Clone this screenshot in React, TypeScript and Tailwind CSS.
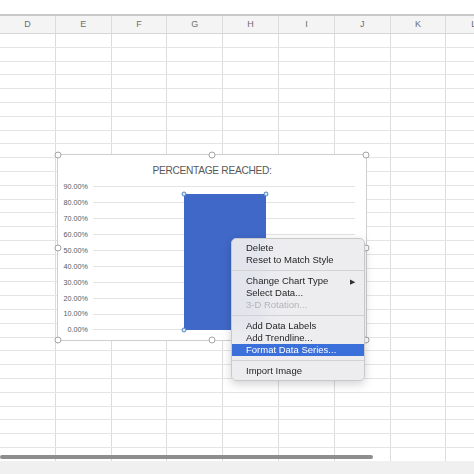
import React from "react";

const columns = ["D", "E", "F", "G", "H", "I", "J", "K", "L"];
const rowCount = 31;
const axisLabels = ["90.00%", "80.00%", "70.00%", "60.00%", "50.00%", "40.00%", "30.00%", "20.00%", "10.00%", "0.00%"];

type MenuItem = { label: string; disabled?: boolean; active?: boolean; submenu?: boolean } | "sep";

const menuItems: MenuItem[] = [
  { label: "Delete" },
  { label: "Reset to Match Style" },
  "sep",
  { label: "Change Chart Type", submenu: true },
  { label: "Select Data..." },
  { label: "3-D Rotation...", disabled: true },
  "sep",
  { label: "Add Data Labels" },
  { label: "Add Trendline..." },
  { label: "Format Data Series...", active: true },
  "sep",
  { label: "Import Image" },
];

// white handle on the chart frame
function FrameHandle({ className }: { className: string }) {
  return (
    <span
      className={`absolute h-[7px] w-[7px] -translate-x-1/2 -translate-y-1/2 rounded-full border border-[#a3a3a3] bg-white ${className}`}
    />
  );
}

// small blue handle on the selected bar
function BarHandle({ className }: { className: string }) {
  return (
    <span
      className={`absolute h-[5px] w-[5px] -translate-x-1/2 -translate-y-1/2 rounded-full border border-[#4f86c6] bg-[#dbe8f6] ${className}`}
    />
  );
}

function Chart() {
  return (
    <div className="absolute left-[57px] top-[154px] flex h-[187px] w-[310px] flex-col border border-[#cfcfcf] bg-white">
      <div className="pt-[9px] text-center text-[10.2px] leading-[13px] tracking-[-0.3px] text-[#595959]">
        PERCENTAGE REACHED:
      </div>
      <div className="relative mt-[2px] flex flex-col">
        {axisLabels.map((label) => (
          <div key={label} className="flex h-[15.9px] items-center">
            <span className="w-[30px] text-right text-[7.2px] leading-none text-[#595959]">{label}</span>
            <div className="ml-[5px] mr-[11px] h-px flex-1 bg-[#e3e3e3]" />
          </div>
        ))}
        {/* data bar */}
        <div className="absolute left-[126px] top-[15px] h-[136px] w-[82px] bg-[#4068c8]">
          <BarHandle className="left-0 top-0" />
          <BarHandle className="left-full top-0" />
          <BarHandle className="left-0 top-full" />
          <BarHandle className="left-full top-full" />
        </div>
      </div>
      <FrameHandle className="left-0 top-0" />
      <FrameHandle className="left-1/2 top-0" />
      <FrameHandle className="left-full top-0" />
      <FrameHandle className="left-0 top-1/2" />
      <FrameHandle className="left-full top-1/2" />
      <FrameHandle className="left-0 top-full" />
      <FrameHandle className="left-1/2 top-full" />
      <FrameHandle className="left-full top-full" />
    </div>
  );
}

function ContextMenu() {
  return (
    <div className="absolute left-[231px] top-[238px] flex w-[134px] flex-col rounded-[5px] border border-[#c9c9cc] bg-[#ececef]/95 py-[3px] shadow-[0_3px_10px_rgba(0,0,0,0.18)] backdrop-blur">
      {menuItems.map((item, i) =>
        item === "sep" ? (
          <div key={i} className="flex h-[9px] items-center">
            <div className="h-px w-full bg-[#d2d2d4]" />
          </div>
        ) : (
          <div
            key={i}
            className={`flex h-[12px] items-center justify-between pl-[14px] pr-[9px] text-[9.5px] leading-none ${
              item.active ? "bg-[#3b6fd9] text-white" : item.disabled ? "text-[#b3b3b6]" : "text-[#1f1f1f]"
            }`}
          >
            <span>{item.label}</span>
            {item.submenu && <span className="text-[7px] text-[#333]">▶</span>}
          </div>
        )
      )}
    </div>
  );
}

export default function App() {
  return (
    <div className="relative flex h-[474px] w-[474px] flex-col overflow-hidden bg-white font-['Liberation_Sans',Arial,sans-serif]">
      <div className="h-[14px] shrink-0 bg-white" />
      <div className="h-[2px] shrink-0 bg-[#c9c9c9]" />
      {/* column headers */}
      <div className="flex h-[18px] shrink-0 border-b border-[#d6d6d6] bg-[#f4f4f4]">
        {columns.map((c) => (
          <div
            key={c}
            className="flex w-[55.8px] shrink-0 items-center justify-center border-r border-[#dcdcdc] text-[9px] text-[#6e6e6e]"
          >
            {c}
          </div>
        ))}
      </div>
      {/* cells */}
      <div className="flex flex-1 flex-col overflow-hidden">
        {Array.from({ length: rowCount }).map((_, r) => (
          <div key={r} className="flex h-[13.8px] shrink-0 border-b border-[#e4e4e4]">
            {columns.map((c) => (
              <div key={c} className="w-[55.8px] shrink-0 border-r border-[#dcdcdc]" />
            ))}
          </div>
        ))}
      </div>
      <div className="h-[13px] shrink-0 bg-[#f0f0f0]" />

      <Chart />
      <ContextMenu />
      {/* horizontal scrollbar */}
      <div className="absolute left-0 top-[455px] h-[4px] w-[373px] rounded-full bg-[#8e8e8e]" />
    </div>
  );
}
